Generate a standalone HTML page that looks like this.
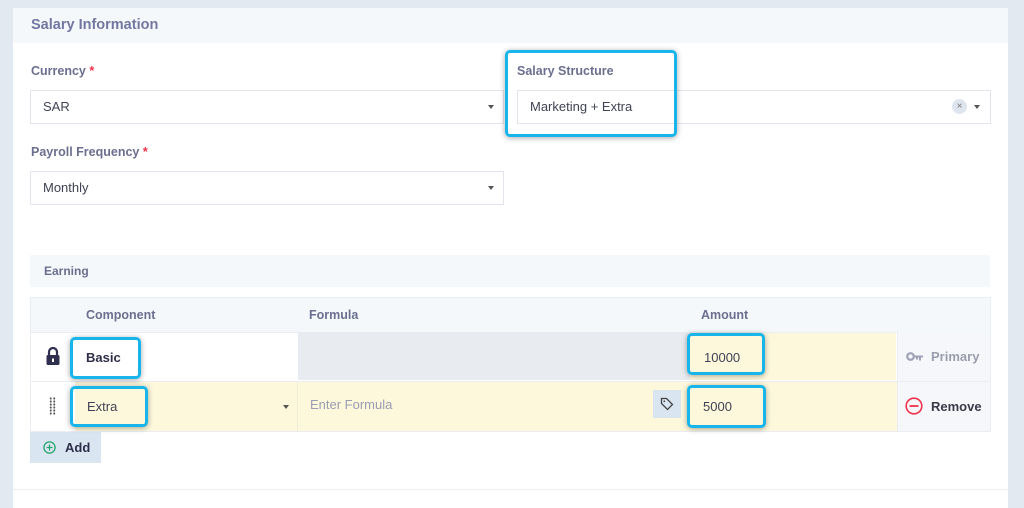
<!DOCTYPE html><html><head><style>
*{box-sizing:border-box;margin:0;padding:0}
body{width:1024px;height:499px;background:#e3e9f1;font-family:"Liberation Sans",sans-serif;position:relative;overflow:hidden;font-size:13px;color:#3f4254}
.a{position:absolute}
.card{left:13px;top:8px;width:995px;height:500px;background:#fff}
.lbl{font-weight:bold;color:#6b6f8f;font-size:12.5px}
.inp{border:1px solid #e2e5ec;background:#fff;color:#3f4254;padding-left:12px;line-height:32px}
.caret{width:0;height:0;border-left:3.5px solid transparent;border-right:3.5px solid transparent;border-top:4px solid #555}
.hl{border:3px solid #17b5ea;border-radius:5px;box-shadow:0 1px 6px rgba(0,0,0,.35)}
.star{color:#f0324a}
</style></head><body>
<div class="a card"></div>
<div class="a" style="left:13px;top:8px;width:995px;height:35px;background:#f5f8fb"></div>
<div class="a lbl" style="left:31px;top:17px;font-size:14.5px;color:#7276a0">Salary Information</div>
<div class="a lbl" style="left:31px;top:64px">Currency <span class="star">*</span></div>
<div class="a inp" style="left:30px;top:90px;width:474px;height:34px">SAR</div>
<div class="a caret" style="left:488px;top:105px"></div>
<div class="a lbl" style="left:517px;top:64px">Salary Structure</div>
<div class="a inp" style="left:517px;top:90px;width:474px;height:34px">Marketing + Extra</div>
<div class="a" style="left:952px;top:99px;width:15px;height:15px;border-radius:50%;background:#dfe5ef;color:#777;font-size:10px;text-align:center;line-height:15px">×</div>
<div class="a caret" style="left:974px;top:105px"></div>
<div class="a hl" style="left:505px;top:50px;width:172px;height:87px"></div>
<div class="a lbl" style="left:31px;top:145px">Payroll Frequency <span class="star">*</span></div>
<div class="a inp" style="left:30px;top:171px;width:474px;height:34px">Monthly</div>
<div class="a caret" style="left:488px;top:186px"></div>

<div class="a" style="left:30px;top:255px;width:960px;height:32px;background:#f5f8fb"></div>
<div class="a lbl" style="left:44px;top:264px;font-size:12px">Earning</div>
<div class="a" style="left:30px;top:297px;width:961px;height:135px;border:1px solid #eaedf2;background:#fff"></div>
<div class="a" style="left:31px;top:298px;width:959px;height:34px;background:#f5f8fb"></div>
<div class="a lbl" style="left:86px;top:308px">Component</div>
<div class="a lbl" style="left:309px;top:308px">Formula</div>
<div class="a lbl" style="left:701px;top:308px">Amount</div>
<!-- row1 -->
<div class="a" style="left:31px;top:332px;width:959px;height:1px;background:#eaedf2"></div>
<div class="a" style="left:298px;top:332px;width:392px;height:48px;background:#e8ebef"></div>
<div class="a" style="left:690px;top:333px;width:206px;height:47px;background:#fdf8dc"></div>
<div class="a" style="left:897px;top:332px;width:93px;height:49px;background:#f5f7fa;border-left:1px solid #eaedf2"></div>
<svg class="a" style="left:45px;top:347px" width="16" height="19" viewBox="0 0 16 19"><path d="M4 8V5a4 4 0 0 1 8 0v3" fill="none" stroke="#2f2f4f" stroke-width="2.2"/><rect x="1.5" y="8" width="13" height="10" rx="1.5" fill="#2f2f4f"/><rect x="7" y="11.5" width="2" height="3.5" fill="#fff"/></svg>
<div class="a" style="left:86px;top:350px;font-weight:bold;color:#2e2e4a">Basic</div>
<div class="a" style="left:704px;top:350px">10000</div>
<svg class="a" style="left:906px;top:352px" width="18" height="9" viewBox="0 0 18 9"><circle cx="4.5" cy="4.5" r="3.3" fill="none" stroke="#a0a3b8" stroke-width="2.2"/><path d="M8 4.5h9M14 4.5v4M11 4.5v3" stroke="#a0a3b8" stroke-width="2"/></svg>
<div class="a" style="left:931px;top:349px;color:#9b9dae;font-weight:bold">Primary</div>
<!-- row2 -->
<div class="a" style="left:31px;top:381px;width:959px;height:1px;background:#eaedf2"></div>
<div class="a" style="left:75px;top:382px;width:822px;height:49px;background:#fdf8dc"></div>
<div class="a" style="left:297px;top:382px;width:1px;height:49px;background:#f0eed8"></div>
<div class="a" style="left:897px;top:382px;width:93px;height:49px;background:#f5f7fa;border-left:1px solid #eaedf2"></div>
<div class="a" style="left:49px;top:397px;width:7px;height:18px;background-image:radial-gradient(circle,#555 0.9px,transparent 1.1px);background-size:3.5px 3px"></div>
<div class="a" style="left:87px;top:399px">Extra</div>
<div class="a caret" style="left:283px;top:405px"></div>
<div class="a" style="left:310px;top:397px;color:#9a9cb2">Enter Formula</div>
<div class="a" style="left:653px;top:390px;width:28px;height:28px;background:#d9e5f1"></div>
<svg class="a" style="left:660px;top:397px" width="14" height="14" viewBox="0 0 14 14"><path d="M1.5 1.5h5l6 6-5 5-6-6z" fill="none" stroke="#444" stroke-width="1.3"/><circle cx="4.3" cy="4.3" r="0.9" fill="#444"/></svg>
<div class="a" style="left:703px;top:399px">5000</div>
<svg class="a" style="left:905px;top:397px" width="18" height="18"><circle cx="9" cy="9" r="7.8" fill="none" stroke="#f0324a" stroke-width="1.6"/><path d="M4.5 9h9" stroke="#f0324a" stroke-width="1.8"/></svg>
<div class="a" style="left:931px;top:399px;font-weight:bold;color:#3a3a4a">Remove</div>
<!-- add -->
<div class="a" style="left:30px;top:432px;width:71px;height:31px;background:#d9e6f2"></div>
<svg class="a" style="left:43px;top:441px" width="13" height="13"><circle cx="6.5" cy="6.5" r="5.6" fill="none" stroke="#2aa36a" stroke-width="1.3"/><path d="M3.5 6.5h6M6.5 3.5v6" stroke="#2aa36a" stroke-width="1.3"/></svg>
<div class="a" style="left:65px;top:440px;font-weight:bold;color:#2e2e4a">Add</div>
<div class="a" style="left:13px;top:489px;width:995px;height:1px;background:#eceef2"></div>
<!-- highlights -->
<div class="a hl" style="left:70px;top:337px;width:71px;height:42px"></div>
<div class="a hl" style="left:70px;top:386px;width:78px;height:41px"></div>
<div class="a hl" style="left:687px;top:333px;width:78px;height:42px"></div>
<div class="a hl" style="left:687px;top:385px;width:79px;height:43px"></div>
</body></html>
